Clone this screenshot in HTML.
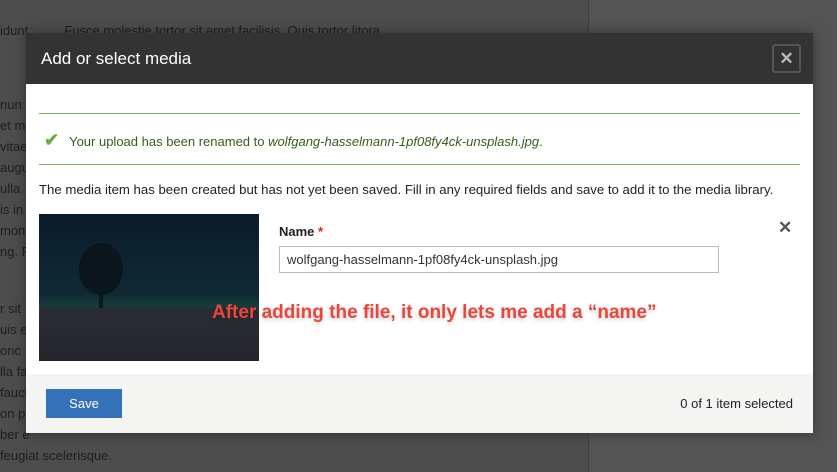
<!DOCTYPE html>
<html><head><style>
body{margin:0;width:837px;height:472px;overflow:hidden;position:relative;background:#4d4d4d;font-family:"Liberation Sans",sans-serif}
.right{position:absolute;left:588px;top:0;width:249px;height:472px;background:#545454;border-left:1px solid #3e3e3e}
.bg{position:absolute;left:0;font-size:13px;color:#1e1e1e;line-height:21px}
.modal{position:absolute;left:26px;top:33px;width:787px;height:400px;background:#fff;box-shadow:0 0 12px rgba(0,0,0,.4)}
.hdr{height:51px;background:#333;color:#fff;font-size:17px;line-height:51px;padding-left:15px}
.x{position:absolute;right:12px;top:11px;width:29px;height:29px;border:2px solid #555;border-radius:3px;color:#bbb;text-align:center;font-size:17px;font-weight:bold;box-sizing:border-box;line-height:25px}
.g{position:absolute;left:13px;width:761px;height:1px;background:#77b259}
.msg{position:absolute;left:18px;top:97px;color:#325e1c;font-size:13px}
.info{position:absolute;left:13px;top:149px;font-size:13.2px;color:#222}
.img{position:absolute;left:13px;top:181px;width:220px;height:147px;background:linear-gradient(#0b1a2a,#0f2a35 55%,#183d3a 63%,#2a2d33 64%,#24262b)}
.foot{position:absolute;left:0;top:341px;width:787px;height:59px;background:#f4f4f2}
</style></head><body>
<div class="right"></div>
<div class="bg" style="top:20px">idunt ........ Fusce molestie tortor sit amet facilisis. Quis tortor litora</div>
<div class="bg" style="top:94px">nun<br>et m<br>vitae<br>augu<br>ulla<br>is in<br>mont<br>ng. P</div>
<div class="bg" style="top:298px">r sit<br>uis e<br>onc<br>lla fa<br>fauci<br>on p<br>ber e<br>feugiat scelerisque.</div>
<div class="modal">
<div class="hdr">Add or select media</div>
<div class="x">✕</div>
<div class="g" style="top:80px"></div>
<div class="msg"><span style="color:#6aab4c;font-size:18px;font-weight:bold;margin-right:10px;">✔</span>Your upload has been renamed to <i>wolfgang-hasselmann-1pf08fy4ck-unsplash.jpg</i>.</div>
<div class="g" style="top:131px"></div>
<div class="info">The media item has been created but has not yet been saved. Fill in any required fields and save to add it to the media library.</div>
<div class="img"><svg width="220" height="147"><g fill="#0a1418" opacity=".85"><rect x="60" y="70" width="4" height="24"/><ellipse cx="62" cy="55" rx="22" ry="26"/></g></svg></div>
<div style="position:absolute;left:253px;top:191px;font-size:13px;font-weight:bold;color:#222">Name <span style="color:#e62600">*</span></div>
<div style="position:absolute;left:253px;top:213px;width:440px;height:27px;border:1px solid #bbb;box-sizing:border-box;font-size:13px;color:#333;padding:5px 7px">wolfgang-hasselmann-1pf08fy4ck-unsplash.jpg</div>
<div style="position:absolute;left:752px;top:185px;font-size:17px;font-weight:bold;color:#555">✕</div>
<div style="position:absolute;left:186px;top:269px;font-size:19px;font-weight:bold;color:#e8473c;text-shadow:0 2px 4px rgba(0,0,0,.2)">After adding the file, it only lets me add a “name”</div>
<div class="foot">
<div style="position:absolute;left:20px;top:15px;width:76px;height:29px;background:#3371b8;color:#fff;font-size:13px;text-align:center;line-height:29px">Save</div>
<div style="position:absolute;right:20px;top:22px;font-size:13px;color:#222">0 of 1 item selected</div>
</div>
</div>
</body></html>
